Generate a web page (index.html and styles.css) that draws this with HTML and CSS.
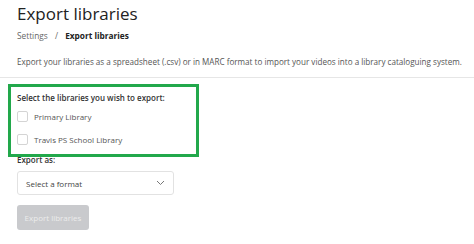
FILE: index.html
```html
<!DOCTYPE html>
<html lang="en">
<head>
    <meta charset="UTF-8">
    <title>Export libraries</title>
    <link rel="stylesheet" href="styles.css">
</head>
<body>
    <div class="page">
        <h1 class="page-title">Export libraries</h1>
        <div class="breadcrumb">
            <a href="#">Settings</a>
            <span class="breadcrumb-sep">/</span>
            <strong>Export libraries</strong>
        </div>
        <p class="intro">Export your libraries as a spreadsheet (.csv) or in MARC format to import your videos into a library cataloguing system.</p>
    </div>

    <hr class="divider">

    <div class="page">
        <div class="library-picker">
            <div class="field-label">Select the libraries you wish to export:</div>
            <label class="check-row"><input type="checkbox"><span class="check-box"></span> Primary Library</label>
            <label class="check-row"><input type="checkbox"><span class="check-box"></span> Travis PS School Library</label>
        </div>

        <div class="field-label format-label">Export as:</div>
        <div class="select">
            <span>Select a format</span>
            <svg class="chevron" width="9" height="6" viewBox="0 0 9 6"><path d="M1 1l3.5 3.5L8 1" fill="none" stroke="#777" stroke-width="1"/></svg>
        </div>

        <button class="btn" disabled>Export libraries</button>
    </div>
</body>
</html>
```

FILE: styles.css
```css
/* Base styles */
body {
    font-family: "Open Sans", Arial, sans-serif;
    font-size: 8px;
    color: #444;
    margin: 0;
    padding: 0;
    background-color: #fff;
}

.page {
    padding: 0 17px;
}

.page-title {
    font-size: 17px;
    font-weight: 400;
    color: #222;
    margin: 0;
    padding-top: 2px;
    line-height: 24px;
}

.breadcrumb {
    margin-top: 4px;
    font-size: 8.3px;
    line-height: 12px;
    color: #666;
}

.breadcrumb a {
    color: #666;
    text-decoration: none;
}

.breadcrumb-sep {
    margin: 0 5px;
}

.breadcrumb strong {
    color: #222;
    font-weight: 700;
}

.intro {
    margin: 14px 0 0 0;
    line-height: 12px;
    font-size: 8.1px;
    color: #555;
    white-space: nowrap;
}

.divider {
    border: 0;
    border-top: 1px solid #e6e6e6;
    margin: 9px 0 0 0;
}

.library-picker {
    margin: 6px 0 0 -9px;
    border: 3px solid #22a84b;
    padding: 5px 7px 9px 6px;
    box-sizing: border-box;
    width: 191px;
    height: 73px;
}

.field-label {
    font-weight: 600;
    color: #333;
    font-size: 8px;
    line-height: 12px;
}

.check-row {
    display: flex;
    align-items: center;
    gap: 6px;
    height: 12px;
    margin-top: 6px;
    color: #555;
}

.check-row + .check-row {
    margin-top: 11px;
}

.check-row input {
    display: none;
}

.check-box {
    width: 11px;
    height: 11px;
    border: 1px solid #d4d4d4;
    border-radius: 2px;
    box-sizing: border-box;
}

.format-label {
    margin-top: -3px;
}

.select {
    margin-top: 5px;
    width: 157px;
    height: 24px;
    border: 1px solid #e2e2e2;
    border-radius: 3px;
    box-sizing: border-box;
    display: flex;
    align-items: center;
    justify-content: space-between;
    padding: 0 8px;
    color: #444;
}

.btn {
    margin-top: 10px;
    width: 72px;
    height: 25px;
    border: 0;
    border-radius: 3px;
    background-color: #c9cacd;
    color: #ececec;
    font-family: inherit;
    font-size: 8px;
    padding: 0;
}
```
